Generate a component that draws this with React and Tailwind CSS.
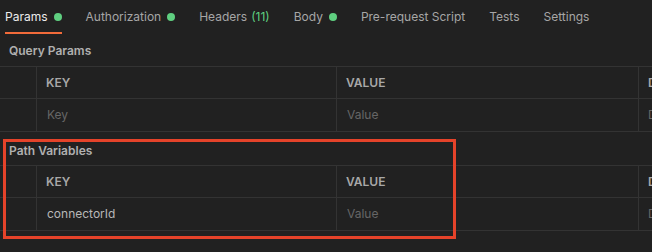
import React from 'react';

const tabs = [
  { label: 'Params', dot: true, active: true },
  { label: 'Authorization', dot: true },
  { label: 'Headers', count: '(11)' },
  { label: 'Body', dot: true },
  { label: 'Pre-request Script' },
  { label: 'Tests' },
  { label: 'Settings' },
];

const Dot = () => <span className="w-[8px] h-[8px] rounded-full bg-[#5fcf80] inline-block" />;

const ParamTable = ({ placeholder, keyText }) => (
  <div className="text-[12px]">
    <div className="flex h-[33px] border-t border-b border-[#333333]">
      <div className="w-[37px] border-r border-[#333333] shrink-0" />
      <div className="w-[300px] border-r border-[#333333] shrink-0 flex items-center pl-[9px] font-semibold text-[#a8a8a8]">KEY</div>
      <div className="w-[302px] border-r border-[#333333] shrink-0 flex items-center pl-[9px] font-semibold text-[#a8a8a8]">VALUE</div>
      <div className="w-[120px] shrink-0 flex items-center pl-[9px] font-semibold text-[#a8a8a8]">DESCRIPTION</div>
    </div>
    <div className="flex h-[33px] border-b border-[#333333]">
      <div className="w-[37px] border-r border-[#333333] shrink-0" />
      <div className={`w-[300px] border-r border-[#333333] shrink-0 flex items-center pl-[10px] ${keyText ? 'text-[#b8b8b8]' : 'text-[#666666]'}`}>
        {keyText || 'Key'}
      </div>
      <div className="w-[302px] border-r border-[#333333] shrink-0 flex items-center pl-[10px] text-[#666666]">Value</div>
      <div className="w-[120px] shrink-0 flex items-center pl-[9px] text-[#666666]">{placeholder}</div>
    </div>
  </div>
);

export default function App() {
  return (
    <div
      className="relative w-[652px] h-[252px] overflow-hidden bg-[#212121]"
      style={{ fontFamily: 'Inter, "Noto Sans", sans-serif' }}
    >
      {/* tabs */}
      <div className="flex h-[34px] pl-[5px] gap-[24px] text-[12px] whitespace-nowrap">
        {tabs.map((t) => (
          <div
            key={t.label}
            className={`flex items-center gap-[6px] pt-[2px] border-b-2 ${t.active ? 'border-[#f26b3a] text-[#ececec]' : 'border-transparent text-[#a6a6a6]'}`}
          >
            <span>
              {t.label}
              {t.count && <span className="text-[#5fcf80] ml-[4px]">{t.count}</span>}
            </span>
            {t.dot && <Dot />}
          </div>
        ))}
      </div>

      {/* query params */}
      <div className="h-[32px] flex items-center pl-[9px] pt-[2px] text-[12px] font-semibold text-[#b0b0b0]">Query Params</div>
      <ParamTable placeholder="Description" />

      {/* path variables */}
      <div className="h-[33px] flex items-center pl-[9px] pt-[4px] text-[12px] font-semibold text-[#b0b0b0]">Path Variables</div>
      <ParamTable placeholder="Description" keyText="connectorId" />

      {/* highlight box */}
      <div className="absolute left-[3px] top-[139px] w-[453px] h-[100px] border-[3px] border-[#e5432a] pointer-events-none" />
    </div>
  );
}
